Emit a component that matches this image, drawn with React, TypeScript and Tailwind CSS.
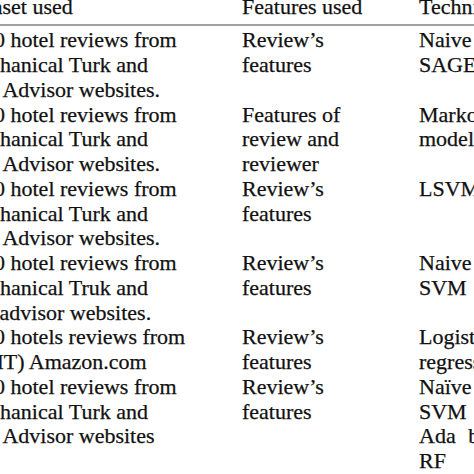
import React from "react";

type Row = { c1: string[]; c2: string[]; c3: string[] };

const rows: Row[] = [
  {
    c1: ["1600 hotel reviews from", "Mechanical Turk and", "Trip Advisor websites."],
    c2: ["Review\u2019s", "features"],
    c3: ["Naive Bayes", "SAGE"],
  },
  {
    c1: ["1600 hotel reviews from", "Mechanical Turk and", "Trip Advisor websites."],
    c2: ["Features of", "review and", "reviewer"],
    c3: ["Markov", "model"],
  },
  {
    c1: ["1600 hotel reviews from", "Mechanical Turk and", "Trip Advisor websites."],
    c2: ["Review\u2019s", "features"],
    c3: ["LSVM"],
  },
  {
    c1: ["1600 hotel reviews from", "Mechanical Truk and", "Trip advisor websites."],
    c2: ["Review\u2019s", "features"],
    c3: ["Naive Bayes", "SVM"],
  },
  {
    c1: ["5800 hotels reviews from", "(AMT) Amazon.com"],
    c2: ["Review\u2019s", "features"],
    c3: ["Logistic", "regression"],
  },
  {
    c1: ["1600 hotel reviews from", "Mechanical Turk and", "Trip Advisor websites"],
    c2: ["Review\u2019s", "features"],
    c3: ["Na\u00efve Bayes", "SVM", "Ada  boost", "RF"],
  },
];

function Cell({ lines }: { lines: string[] }) {
  return (
    <div className="flex flex-col">
      {lines.map((l, i) => (
        <div
          key={i}
          className={
            l.startsWith("Ada")
              ? "whitespace-nowrap [word-spacing:7px]"
              : l.startsWith("Trip advisor")
              ? "whitespace-nowrap ml-[-4px]"
              : "whitespace-nowrap"
          }
        >
          {l.replace("  ", " ")}
        </div>
      ))}
    </div>
  );
}

export default function App() {
  return (
    <div className="w-[474px] h-[474px] overflow-hidden bg-white">
      <div
        className="ml-[-39px] mt-[-5px] w-[513px] text-[22px] leading-[24.75px] text-[#111111] [-webkit-text-stroke:0.25px_#111111]"
        style={{ fontFamily: '"Liberation Serif", "Times New Roman", serif' }}
      >
        <div className="grid grid-cols-[281px_177px_55px] pb-[4px]">
          <div className="whitespace-nowrap">Dataset used</div>
          <div className="whitespace-nowrap">Features used</div>
          <div className="whitespace-nowrap">Technique used</div>
        </div>
        <div className="h-[2px] bg-[#a0a0a0]" />
        <div className="pt-[2.5px] flex flex-col">
          {rows.map((r, i) => (
            <div key={i} className="grid grid-cols-[281px_177px_55px]">
              <Cell lines={r.c1} />
              <Cell lines={r.c2} />
              <Cell lines={r.c3} />
            </div>
          ))}
        </div>
      </div>
    </div>
  );
}
